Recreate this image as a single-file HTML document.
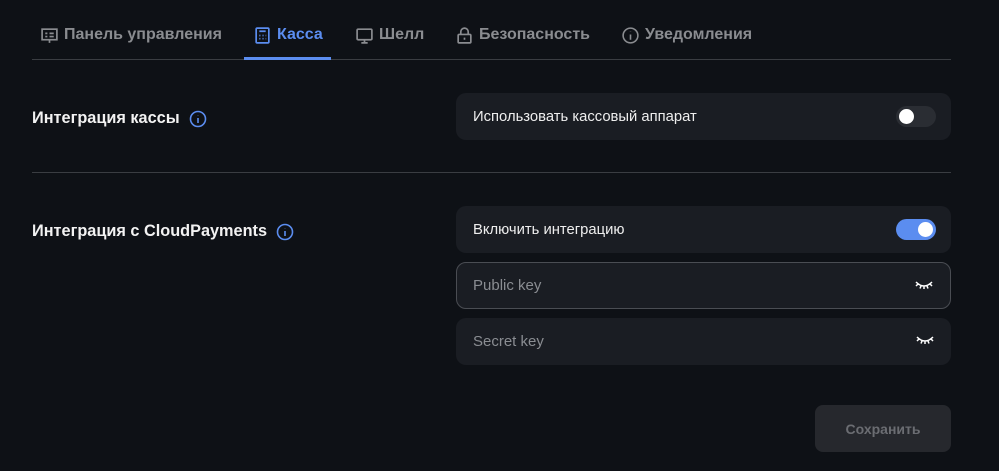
<!DOCTYPE html>
<html><head><meta charset="utf-8"><style>
*{box-sizing:border-box;margin:0;padding:0}
body{width:999px;height:471px;background:#0e1116;font-family:"Liberation Sans",sans-serif;position:relative;overflow:hidden;color:#fff}
.abs{position:absolute}
.tab{position:absolute;top:25px;font-size:16px;font-weight:bold;color:#8a8c90;display:flex;align-items:center;gap:5px;height:20px}
.tab svg{width:19px;height:19px}
.line{position:absolute;left:32px;width:919px;height:1px;background:#3a3d42}
.title{position:absolute;left:32px;font-size:16.3px;font-weight:bold;color:#f2f2f2;display:flex;align-items:center;gap:9px}
.card{position:absolute;left:456px;width:495px;height:47px;background:#1a1d23;border-radius:10px;font-size:14.8px;color:#eee;padding-left:17px;display:flex;align-items:center}
.inp{color:#8a8d92;font-size:15px}
.tg{position:absolute;right:15px;top:13px;width:40px;height:21px;border-radius:11px}
.tg i{position:absolute;top:3px;width:15px;height:15px;border-radius:50%;background:#fff}
.eye{position:absolute;right:17px;top:17px}
</style></head><body>
<div class="tab" style="left:40px"><svg viewBox="0 0 18 18" fill="none" stroke="#8a8c90" stroke-width="1.6"><rect x="2" y="3" width="14" height="10"/><path d="M9 13v3M5 7h2M5 10h2M9 7h4M9 10h4"/></svg>Панель управления</div>
<div class="tab" style="left:253px;color:#5b8df0"><svg viewBox="0 0 18 18" fill="none" stroke="#5b8df0" stroke-width="1.6"><rect x="3" y="2" width="12" height="14" rx="1"/><path d="M6 5h6M6 9h1M9 9h1M12 9h0.5M6 12h1M9 12h1M12 12h0.5"/></svg>Касса</div>
<div class="tab" style="left:355px"><svg viewBox="0 0 18 18" fill="none" stroke="#8a8c90" stroke-width="1.6"><rect x="2" y="3" width="14" height="10" rx="1"/><path d="M9 13v3M6 16h6"/></svg>Шелл</div>
<div class="tab" style="left:455px"><svg viewBox="0 0 18 18" fill="none" stroke="#8a8c90" stroke-width="1.6"><rect x="3" y="8" width="12" height="8" rx="1"/><path d="M5.5 8V5.5a3.5 3.5 0 0 1 7 0V8M9 11v2"/></svg>Безопасность</div>
<div class="tab" style="left:621px"><svg viewBox="0 0 18 18" fill="none" stroke="#8a8c90" stroke-width="1.5"><circle cx="9" cy="9" r="7"/><path d="M9 8v5M9 5.2v.3"/></svg>Уведомления</div>
<div class="line" style="top:59px"></div>
<div class="abs" style="left:244px;top:57px;width:87px;height:3px;background:#5b8df0"></div>

<div class="title" style="top:109px">Интеграция кассы <svg width="18" height="18" viewBox="0 0 18 18" fill="none" stroke="#5b8df0" stroke-width="1.6"><circle cx="9" cy="9" r="7.5"/><path d="M9 8v5M9 5.2v.3"/></svg></div>
<div class="card" style="top:93px">Использовать кассовый аппарат<div class="tg" style="background:#2a2d33"><i style="left:3px"></i></div></div>
<div class="line" style="top:172px"></div>

<div class="title" style="top:222px">Интеграция с CloudPayments <svg width="18" height="18" viewBox="0 0 18 18" fill="none" stroke="#5b8df0" stroke-width="1.6"><circle cx="9" cy="9" r="7.5"/><path d="M9 8v5M9 5.2v.3"/></svg></div>
<div class="card" style="top:206px">Включить интеграцию<div class="tg" style="background:#5b8df0"><i style="right:3px"></i></div></div>
<div class="card inp" style="top:262px;border:1px solid #4a4d53;padding-left:16px">Public key<svg class="eye" width="18" height="12" viewBox="0 0 18 12" fill="none" stroke="#fff" stroke-width="1.5"><path d="M1 2q8 8 16 0M3 4l-2 2M6 6l-1 2.5M9 6.5v2.5M12 6l1 2.5M15 4l2 2"/></svg></div>
<div class="card inp" style="top:318px">Secret key<svg class="eye" width="18" height="12" viewBox="0 0 18 12" fill="none" stroke="#fff" stroke-width="1.5"><path d="M1 2q8 8 16 0M3 4l-2 2M6 6l-1 2.5M9 6.5v2.5M12 6l1 2.5M15 4l2 2"/></svg></div>

<div class="abs" style="left:815px;top:405px;width:136px;height:47px;background:#26282d;border-radius:8px;color:#6b6d72;font-size:14px;font-weight:bold;display:flex;align-items:center;justify-content:center">Сохранить</div>
</body></html>
